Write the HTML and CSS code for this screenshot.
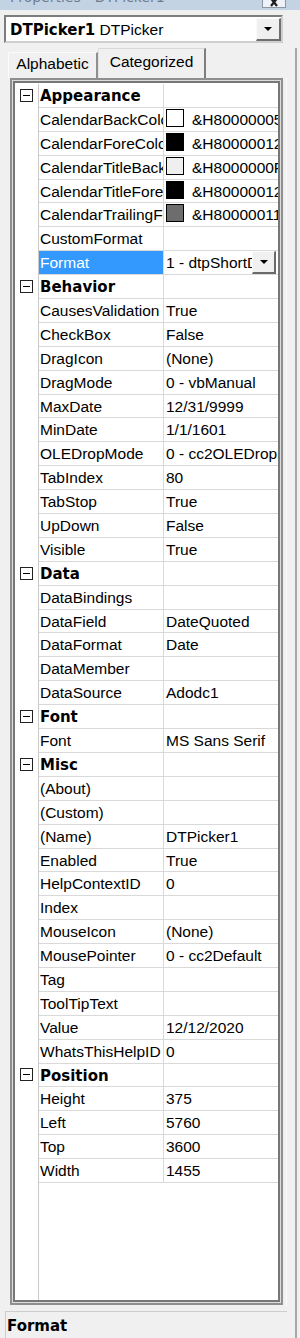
FILE: index.html
```html
<!DOCTYPE html>
<html>
<head>
<meta charset="utf-8">
<link rel="stylesheet" href="styles.css">
</head>
<body>
<div class="window">
  <div class="titlebar">
    <span class="title">Properties - DTPicker1</span>
    <span class="close"><svg width="12" height="7" viewBox="0 0 12 7"><path d="M1 -4L9 6M11 -4L3 6" stroke="#1e1e1e" stroke-width="2.2" fill="none"/></svg></span>
  </div>
  <div class="objbox">
    <span class="objtext"><b class="bold">DTPicker1</b> DTPicker</span>
    <span class="dropbtn"><svg width="8" height="4" viewBox="0 0 8 4"><path d="M0 0H8L4 4Z" fill="#000"/></svg></span>
  </div>
  <div class="lower">
    <div class="pane">
      <div class="tabs">
        <div class="tab">Alphabetic</div>
        <div class="tab active">Categorized</div>
      </div>
      <div class="page">
        <div class="frame">
          <div class="grid">
            <div class="row cat"><div class="m"><svg width="13" height="13" viewBox="0 0 13 13"><rect x="0.5" y="0.5" width="12" height="12" fill="#fff" stroke="#222"/><path d="M3 6.5H10" stroke="#000"/></svg></div><div class="n">Appearance</div><div class="v"></div></div>
            <div class="row"><div class="m"></div><div class="n">CalendarBackColor</div><div class="v"><span class="sw sw-white"></span>&amp;H80000005&amp;</div></div>
            <div class="row"><div class="m"></div><div class="n">CalendarForeColor</div><div class="v"><span class="sw sw-black"></span>&amp;H80000012&amp;</div></div>
            <div class="row"><div class="m"></div><div class="n">CalendarTitleBackColor</div><div class="v"><span class="sw sw-face"></span>&amp;H8000000F&amp;</div></div>
            <div class="row"><div class="m"></div><div class="n">CalendarTitleForeColor</div><div class="v"><span class="sw sw-black"></span>&amp;H80000012&amp;</div></div>
            <div class="row"><div class="m"></div><div class="n">CalendarTrailingForeColor</div><div class="v"><span class="sw sw-gray"></span>&amp;H80000011&amp;</div></div>
            <div class="row"><div class="m"></div><div class="n">CustomFormat</div><div class="v"></div></div>
            <div class="row"><div class="m"></div><div class="n sel">Format</div><div class="v vsel"><span class="vtext">1 - dtpShortDate</span><span class="cellbtn"><svg width="8" height="4" viewBox="0 0 8 4"><path d="M0 0H8L4 4Z" fill="#000"/></svg></span></div></div>
            <div class="row cat"><div class="m"><svg width="13" height="13" viewBox="0 0 13 13"><rect x="0.5" y="0.5" width="12" height="12" fill="#fff" stroke="#222"/><path d="M3 6.5H10" stroke="#000"/></svg></div><div class="n">Behavior</div><div class="v"></div></div>
            <div class="row"><div class="m"></div><div class="n">CausesValidation</div><div class="v">True</div></div>
            <div class="row"><div class="m"></div><div class="n">CheckBox</div><div class="v">False</div></div>
            <div class="row"><div class="m"></div><div class="n">DragIcon</div><div class="v">(None)</div></div>
            <div class="row"><div class="m"></div><div class="n">DragMode</div><div class="v">0 - vbManual</div></div>
            <div class="row"><div class="m"></div><div class="n">MaxDate</div><div class="v">12/31/9999</div></div>
            <div class="row"><div class="m"></div><div class="n">MinDate</div><div class="v">1/1/1601</div></div>
            <div class="row"><div class="m"></div><div class="n">OLEDropMode</div><div class="v">0 - cc2OLEDropNone</div></div>
            <div class="row"><div class="m"></div><div class="n">TabIndex</div><div class="v">80</div></div>
            <div class="row"><div class="m"></div><div class="n">TabStop</div><div class="v">True</div></div>
            <div class="row"><div class="m"></div><div class="n">UpDown</div><div class="v">False</div></div>
            <div class="row"><div class="m"></div><div class="n">Visible</div><div class="v">True</div></div>
            <div class="row cat"><div class="m"><svg width="13" height="13" viewBox="0 0 13 13"><rect x="0.5" y="0.5" width="12" height="12" fill="#fff" stroke="#222"/><path d="M3 6.5H10" stroke="#000"/></svg></div><div class="n">Data</div><div class="v"></div></div>
            <div class="row"><div class="m"></div><div class="n">DataBindings</div><div class="v"></div></div>
            <div class="row"><div class="m"></div><div class="n">DataField</div><div class="v">DateQuoted</div></div>
            <div class="row"><div class="m"></div><div class="n">DataFormat</div><div class="v">Date</div></div>
            <div class="row"><div class="m"></div><div class="n">DataMember</div><div class="v"></div></div>
            <div class="row"><div class="m"></div><div class="n">DataSource</div><div class="v">Adodc1</div></div>
            <div class="row cat"><div class="m"><svg width="13" height="13" viewBox="0 0 13 13"><rect x="0.5" y="0.5" width="12" height="12" fill="#fff" stroke="#222"/><path d="M3 6.5H10" stroke="#000"/></svg></div><div class="n">Font</div><div class="v"></div></div>
            <div class="row"><div class="m"></div><div class="n">Font</div><div class="v">MS Sans Serif</div></div>
            <div class="row cat"><div class="m"><svg width="13" height="13" viewBox="0 0 13 13"><rect x="0.5" y="0.5" width="12" height="12" fill="#fff" stroke="#222"/><path d="M3 6.5H10" stroke="#000"/></svg></div><div class="n">Misc</div><div class="v"></div></div>
            <div class="row"><div class="m"></div><div class="n">(About)</div><div class="v"></div></div>
            <div class="row"><div class="m"></div><div class="n">(Custom)</div><div class="v"></div></div>
            <div class="row"><div class="m"></div><div class="n">(Name)</div><div class="v">DTPicker1</div></div>
            <div class="row"><div class="m"></div><div class="n">Enabled</div><div class="v">True</div></div>
            <div class="row"><div class="m"></div><div class="n">HelpContextID</div><div class="v">0</div></div>
            <div class="row"><div class="m"></div><div class="n">Index</div><div class="v"></div></div>
            <div class="row"><div class="m"></div><div class="n">MouseIcon</div><div class="v">(None)</div></div>
            <div class="row"><div class="m"></div><div class="n">MousePointer</div><div class="v">0 - cc2Default</div></div>
            <div class="row"><div class="m"></div><div class="n">Tag</div><div class="v"></div></div>
            <div class="row"><div class="m"></div><div class="n">ToolTipText</div><div class="v"></div></div>
            <div class="row"><div class="m"></div><div class="n">Value</div><div class="v">12/12/2020</div></div>
            <div class="row"><div class="m"></div><div class="n">WhatsThisHelpID</div><div class="v">0</div></div>
            <div class="row cat"><div class="m"><svg width="13" height="13" viewBox="0 0 13 13"><rect x="0.5" y="0.5" width="12" height="12" fill="#fff" stroke="#222"/><path d="M3 6.5H10" stroke="#000"/></svg></div><div class="n">Position</div><div class="v"></div></div>
            <div class="row"><div class="m"></div><div class="n">Height</div><div class="v">375</div></div>
            <div class="row"><div class="m"></div><div class="n">Left</div><div class="v">5760</div></div>
            <div class="row"><div class="m"></div><div class="n">Top</div><div class="v">3600</div></div>
            <div class="row"><div class="m"></div><div class="n">Width</div><div class="v">1455</div></div>
            <div class="filler"><div class="m"></div><div></div></div>
          </div>
        </div>
      </div>
      <div class="status">Format</div>
    </div>
    <div class="edge"></div>
  </div>
</div>
</body>
</html>
```

FILE: styles.css
```css
html, body {
  margin: 0;
  padding: 0;
}
body {
  width: 300px;
  height: 1338px;
  overflow: hidden;
  background: #f0f0f0;
  font-family: "Liberation Sans", Arial, sans-serif;
  font-size: 15.5px;
  color: #000;
}
.window {
  display: flex;
  flex-direction: column;
  height: 1338px;
}
.titlebar {
  flex: none;
  height: 10px;
  background: #c4d3e4;
  display: flex;
  justify-content: space-between;
  overflow: hidden;
}
.title {
  display: block;
  margin-top: -11px;
  padding-left: 10px;
  font-family: "DejaVu Sans", sans-serif;
  font-size: 14px;
  line-height: 16px;
  color: #6c7d92;
  white-space: nowrap;
}
.close {
  display: flex;
  justify-content: center;
  align-items: flex-start;
  width: 22px;
  height: 7px;
  margin-right: 14px;
  background: #eef1f5;
  border: 1px solid #8c97a6;
  border-top: none;
}
.objbox {
  flex: none;
  display: flex;
  margin: 5px 17px 5px 4px;
  height: 28px;
  box-sizing: border-box;
  background: #fff;
  border: 2px solid;
  border-color: #7d7d7d #cfcfcf #cfcfcf #7d7d7d;
}
.objtext {
  flex: 1;
  padding: 1px 0 0 4px;
  line-height: 24px;
  white-space: nowrap;
  overflow: hidden;
}
.bold {
  font-family: "DejaVu Sans", sans-serif;
  font-weight: bold;
  font-size: 15px;
}
.dropbtn {
  flex: none;
  width: 25px;
  height: 23px;
  margin-top: 1px;
  box-sizing: border-box;
  background: #f0f0f0;
  border-top: 1px solid #fafafa;
  border-left: 1px solid #fafafa;
  border-right: 2px solid #6e6e6e;
  border-bottom: 2px solid #6e6e6e;
  display: flex;
  align-items: center;
  justify-content: center;
}
.lower {
  flex: 1;
  display: flex;
  min-height: 0;
}
.pane {
  width: 295px;
  display: flex;
  flex-direction: column;
}
.edge {
  width: 5px;
  box-sizing: border-box;
  border-left: 2px solid #a7a7a7;
}
.tabs {
  flex: none;
  height: 30px;
  display: flex;
  align-items: flex-end;
  padding-left: 8px;
}
.tab {
  box-sizing: border-box;
  width: 90px;
  height: 26px;
  text-align: center;
  line-height: 18px;
  padding-top: 2px;
  background: #f0f0f0;
  border-top: 1px solid #fbfbfb;
  border-left: 1px solid #fbfbfb;
  border-right: 2px solid #8f8f8f;
  white-space: nowrap;
}
.tab.active {
  width: 108px;
  height: 30px;
  padding-top: 4px;
  border-top: 1px solid #d8d8d8;
  border-left: 1px solid #e4e4e4;
  border-right: 2px solid #7e7e7e;
}
.page {
  flex: 1;
  min-height: 0;
  width: 279px;
  margin-left: 8px;
  box-sizing: border-box;
  padding: 0 3px 2px 2px;
  display: flex;
  border-right: 1px solid #fbfbfb;
}
.frame {
  flex: 1;
  display: flex;
  border: 2px solid #8f8f8f;
  padding: 1px;
  background: #dcdcdc;
}
.grid {
  flex: 1;
  display: flex;
  flex-direction: column;
  background: #fff;
  border: 2px solid #777;
  padding-top: 1px;
  overflow: hidden;
}
.row {
  flex: none;
  display: grid;
  grid-template-columns: 24px 125px 1fr;
  height: 23.9px;
}
.m {
  border-right: 1px solid #c9c9c9;
  display: flex;
  align-items: center;
  padding-left: 5px;
}
.m svg {
  margin-top: -1px;
}
.n, .v {
  border-bottom: 1px solid #d9d9d9;
  padding-top: 1px;
  line-height: 22.9px;
  white-space: nowrap;
  overflow: hidden;
}
.n {
  border-right: 1px solid #d9d9d9;
  padding-left: 1px;
}
.v {
  padding-left: 2px;
}
.cat .n {
  font-family: "DejaVu Sans", sans-serif;
  font-weight: bold;
  font-size: 15px;
}
.n.sel {
  background: #3399ff;
  color: #fff;
}
.sw {
  display: inline-block;
  width: 18px;
  height: 18px;
  box-sizing: border-box;
  border: 1px solid #000;
  margin-right: 8px;
  vertical-align: -2px;
}
.sw-white { background: #fff; }
.sw-black { background: #000; }
.sw-face { background: #efefef; }
.sw-gray { background: #6d6d6d; }
.vsel {
  display: flex;
  padding-top: 0;
  padding-right: 2px;
}
.vtext {
  flex: 1;
  overflow: hidden;
  padding-top: 1px;
}
.cellbtn {
  flex: none;
  width: 24px;
  box-sizing: border-box;
  background: #f0f0f0;
  border-top: 1px solid #fcfcfc;
  border-left: 1px solid #fcfcfc;
  border-right: 2px solid #6a6a6a;
  border-bottom: 2px solid #6a6a6a;
  display: flex;
  align-items: center;
  justify-content: center;
}
.filler {
  flex: 1;
  display: grid;
  grid-template-columns: 24px 1fr;
}
.status {
  flex: none;
  height: 27px;
  width: 282px;
  margin: 4px 0 0 5px;
  box-sizing: border-box;
  border-top: 1px solid #cdcdcd;
  border-left: 1px solid #cdcdcd;
  padding: 5px 0 0 1px;
  font-family: "DejaVu Sans", sans-serif;
  font-weight: bold;
  font-size: 15px;
  line-height: 18px;
  white-space: nowrap;
}
```
